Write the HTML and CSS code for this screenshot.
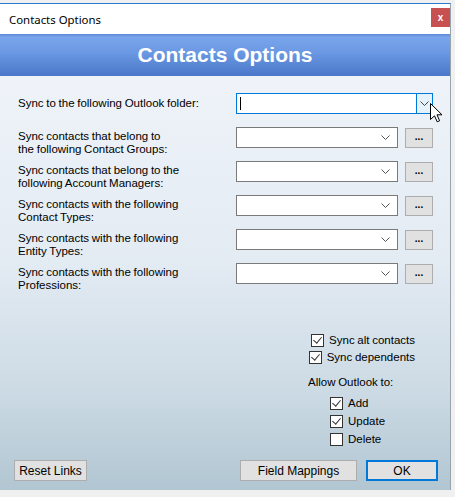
FILE: index.html
```html
<!DOCTYPE html>
<html lang="en">
<head>
    <meta charset="UTF-8">
    <title>Contacts Options</title>
    <link rel="stylesheet" href="styles.css">
</head>
<body>
    <div class="window">
        <div class="titlebar">
            <span class="title">Contacts Options</span>
            <span class="close">x</span>
        </div>
        <div class="header">Contacts Options</div>

        <div class="content">
            <div class="fields">
                <div class="field single">
                    <label>Sync to the following Outlook folder:</label>
                    <div class="combo active">
                        <span class="caret"></span>
                        <span class="drop">
                            <svg width="9" height="5" viewBox="0 0 9 5"><path d="M0.5 0.5 L4.5 4.5 L8.5 0.5" fill="none" stroke="#444" stroke-width="1"/></svg>
                        </span>
                    </div>
                </div>
                <div class="field">
                    <label>Sync contacts that belong to<br>the following Contact Groups:</label>
                    <div class="combo"><span class="chev"><svg width="9" height="5" viewBox="0 0 9 5"><path d="M0.5 0.5 L4.5 4.5 L8.5 0.5" fill="none" stroke="#555" stroke-width="1"/></svg></span></div>
                    <button class="dots">...</button>
                </div>
                <div class="field">
                    <label>Sync contacts that belong to the<br>following Account Managers:</label>
                    <div class="combo"><span class="chev"><svg width="9" height="5" viewBox="0 0 9 5"><path d="M0.5 0.5 L4.5 4.5 L8.5 0.5" fill="none" stroke="#555" stroke-width="1"/></svg></span></div>
                    <button class="dots">...</button>
                </div>
                <div class="field">
                    <label>Sync contacts with the following<br>Contact Types:</label>
                    <div class="combo"><span class="chev"><svg width="9" height="5" viewBox="0 0 9 5"><path d="M0.5 0.5 L4.5 4.5 L8.5 0.5" fill="none" stroke="#555" stroke-width="1"/></svg></span></div>
                    <button class="dots">...</button>
                </div>
                <div class="field">
                    <label>Sync contacts with the following<br>Entity Types:</label>
                    <div class="combo"><span class="chev"><svg width="9" height="5" viewBox="0 0 9 5"><path d="M0.5 0.5 L4.5 4.5 L8.5 0.5" fill="none" stroke="#555" stroke-width="1"/></svg></span></div>
                    <button class="dots">...</button>
                </div>
                <div class="field">
                    <label>Sync contacts with the following<br>Professions:</label>
                    <div class="combo"><span class="chev"><svg width="9" height="5" viewBox="0 0 9 5"><path d="M0.5 0.5 L4.5 4.5 L8.5 0.5" fill="none" stroke="#555" stroke-width="1"/></svg></span></div>
                    <button class="dots">...</button>
                </div>
            </div>

            <div class="options">
                <div class="checks">
                    <div class="check"><span class="box on"></span>Sync alt contacts</div>
                    <div class="check"><span class="box on"></span>Sync dependents</div>
                </div>
                <div class="allow">
                    <div class="allow-title">Allow Outlook to:</div>
                    <div class="allow-list">
                        <div class="check"><span class="box on"></span>Add</div>
                        <div class="check"><span class="box on"></span>Update</div>
                        <div class="check"><span class="box"></span>Delete</div>
                    </div>
                </div>
            </div>

            <div class="footer">
                <button class="btn reset">Reset Links</button>
                <button class="btn mappings">Field Mappings</button>
                <button class="btn ok">OK</button>
            </div>
        </div>
    </div>

    <!-- mouse pointer over the first drop-down -->
    <svg class="pointer" width="13" height="20" viewBox="0 0 13 20">
        <path d="M0.5 0.5 L0.5 16.5 L4.5 12.8 L7.2 18.8 L9.6 17.8 L7 11.8 L12 11.8 Z" fill="#fff" stroke="#000" stroke-width="1" stroke-linejoin="miter"/>
    </svg>
</body>
</html>
```

FILE: styles.css
```css
body {
    margin: 0;
    width: 455px;
    height: 497px;
    overflow: hidden;
    background-color: #f0f0f0;
    font-family: "Liberation Sans", Arial, sans-serif;
    position: relative;
}
.window {
    margin-top: 3px;
    width: 450px;
    border-top: 1px solid #2a78d2;
    border-right: 1px solid #9aa4ad;
    background-color: #fff;
}
.titlebar {
    height: 30px;
    display: flex;
    align-items: center;
    justify-content: space-between;
    padding: 0 0 0 9px;
}
.title {
    font-family: "Noto Sans", sans-serif;
    font-size: 11.4px;
    color: #000;
    margin-top: 1px;
}
.close {
    width: 19px;
    height: 19px;
    margin-top: -3px;
    background-color: #c75050;
    color: #fff;
    font-size: 10px;
    font-weight: bold;
    display: flex;
    align-items: center;
    justify-content: center;
}
.header {
    height: 42px;
    background: linear-gradient(#5c88d4 0, #79a5ec 3px, #6b98e2 45%, #4a77c9 100%);
    color: #fff;
    font-size: 21px;
    font-weight: bold;
    text-align: center;
    line-height: 42px;
}
.content {
    height: 414px;
    box-sizing: border-box;
    padding: 17px 0 9px 18px;
    background: linear-gradient(#eff3f9 0, #e3ebf3 45%, #cddbe5 75%, #b1c6d2 100%);
    display: flex;
    flex-direction: column;
    font-size: 11.5px;
    word-spacing: -0.5px;
    color: #000;
}
.fields {
    display: flex;
    flex-direction: column;
    gap: 13px;
}
.field {
    height: 21px;
    display: flex;
    align-items: flex-start;
}
.field label {
    width: 218px;
    line-height: 13px;
    padding-top: 3px;
    white-space: nowrap;
}
.field.single {
    align-items: center;
}
.field.single label {
    padding-top: 0;
}
.combo {
    width: 162px;
    height: 21px;
    box-sizing: border-box;
    border: 1px solid #7a7a7a;
    background-color: #fff;
    position: relative;
    display: flex;
    align-items: center;
    justify-content: flex-end;
}
.chev {
    margin-right: 7px;
    display: flex;
}
.combo.active {
    width: 197px;
    border-color: #0078d7;
    justify-content: space-between;
}
.caret {
    width: 1px;
    height: 13px;
    margin-left: 3px;
    background-color: #000;
}
.drop {
    width: 16px;
    height: 19px;
    box-sizing: border-box;
    border-left: 1px solid #0078d7;
    background-color: #e5f1fb;
    display: flex;
    align-items: center;
    justify-content: center;
}
.dots {
    margin-left: 7px;
    margin-top: 1px;
    width: 28px;
    height: 20px;
    padding: 0 0 4px;
    border: 1px solid #adadad;
    background-color: #e1e1e1;
    font-family: "Liberation Sans", Arial, sans-serif;
    font-size: 10px;
    font-weight: bold;
    color: #000;
}
.options {
    margin-top: 50px;
    display: flex;
    flex-direction: column;
    align-items: flex-end;
    padding-right: 35px;
}
.checks {
    display: flex;
    flex-direction: column;
    align-items: flex-end;
    gap: 4px;
}
.check {
    display: flex;
    align-items: center;
    height: 13px;
    line-height: 13px;
}
.box {
    width: 13px;
    height: 13px;
    box-sizing: border-box;
    border: 1px solid #333;
    background-color: #fff;
    margin-right: 5px;
    position: relative;
}
.box.on::after {
    content: "";
    position: absolute;
    left: 3px;
    top: 0px;
    width: 4px;
    height: 7px;
    border: solid #333;
    border-width: 0 1px 1px 0;
    transform: rotate(40deg);
}
.allow {
    margin-top: 12px;
    width: 107px;
    margin-right: 0;
}
.allow-title {
    line-height: 13px;
}
.allow-list {
    margin-top: 8px;
    margin-left: 22px;
    display: flex;
    flex-direction: column;
    gap: 5px;
}
.footer {
    margin-top: auto;
    display: flex;
    padding-right: 12px;
    margin-left: -4px;
}
.btn {
    height: 21px;
    border: 1px solid #adadad;
    background-color: #e1e1e1;
    font-family: "Liberation Sans", Arial, sans-serif;
    font-size: 12px;
    color: #000;
    padding: 0;
}
.reset {
    width: 73px;
}
.mappings {
    width: 117px;
    margin-left: auto;
}
.ok {
    width: 72px;
    margin-left: 9px;
    border: 2px solid #0078d7;
}
.pointer {
    position: absolute;
    left: 430px;
    top: 103px;
}
```
